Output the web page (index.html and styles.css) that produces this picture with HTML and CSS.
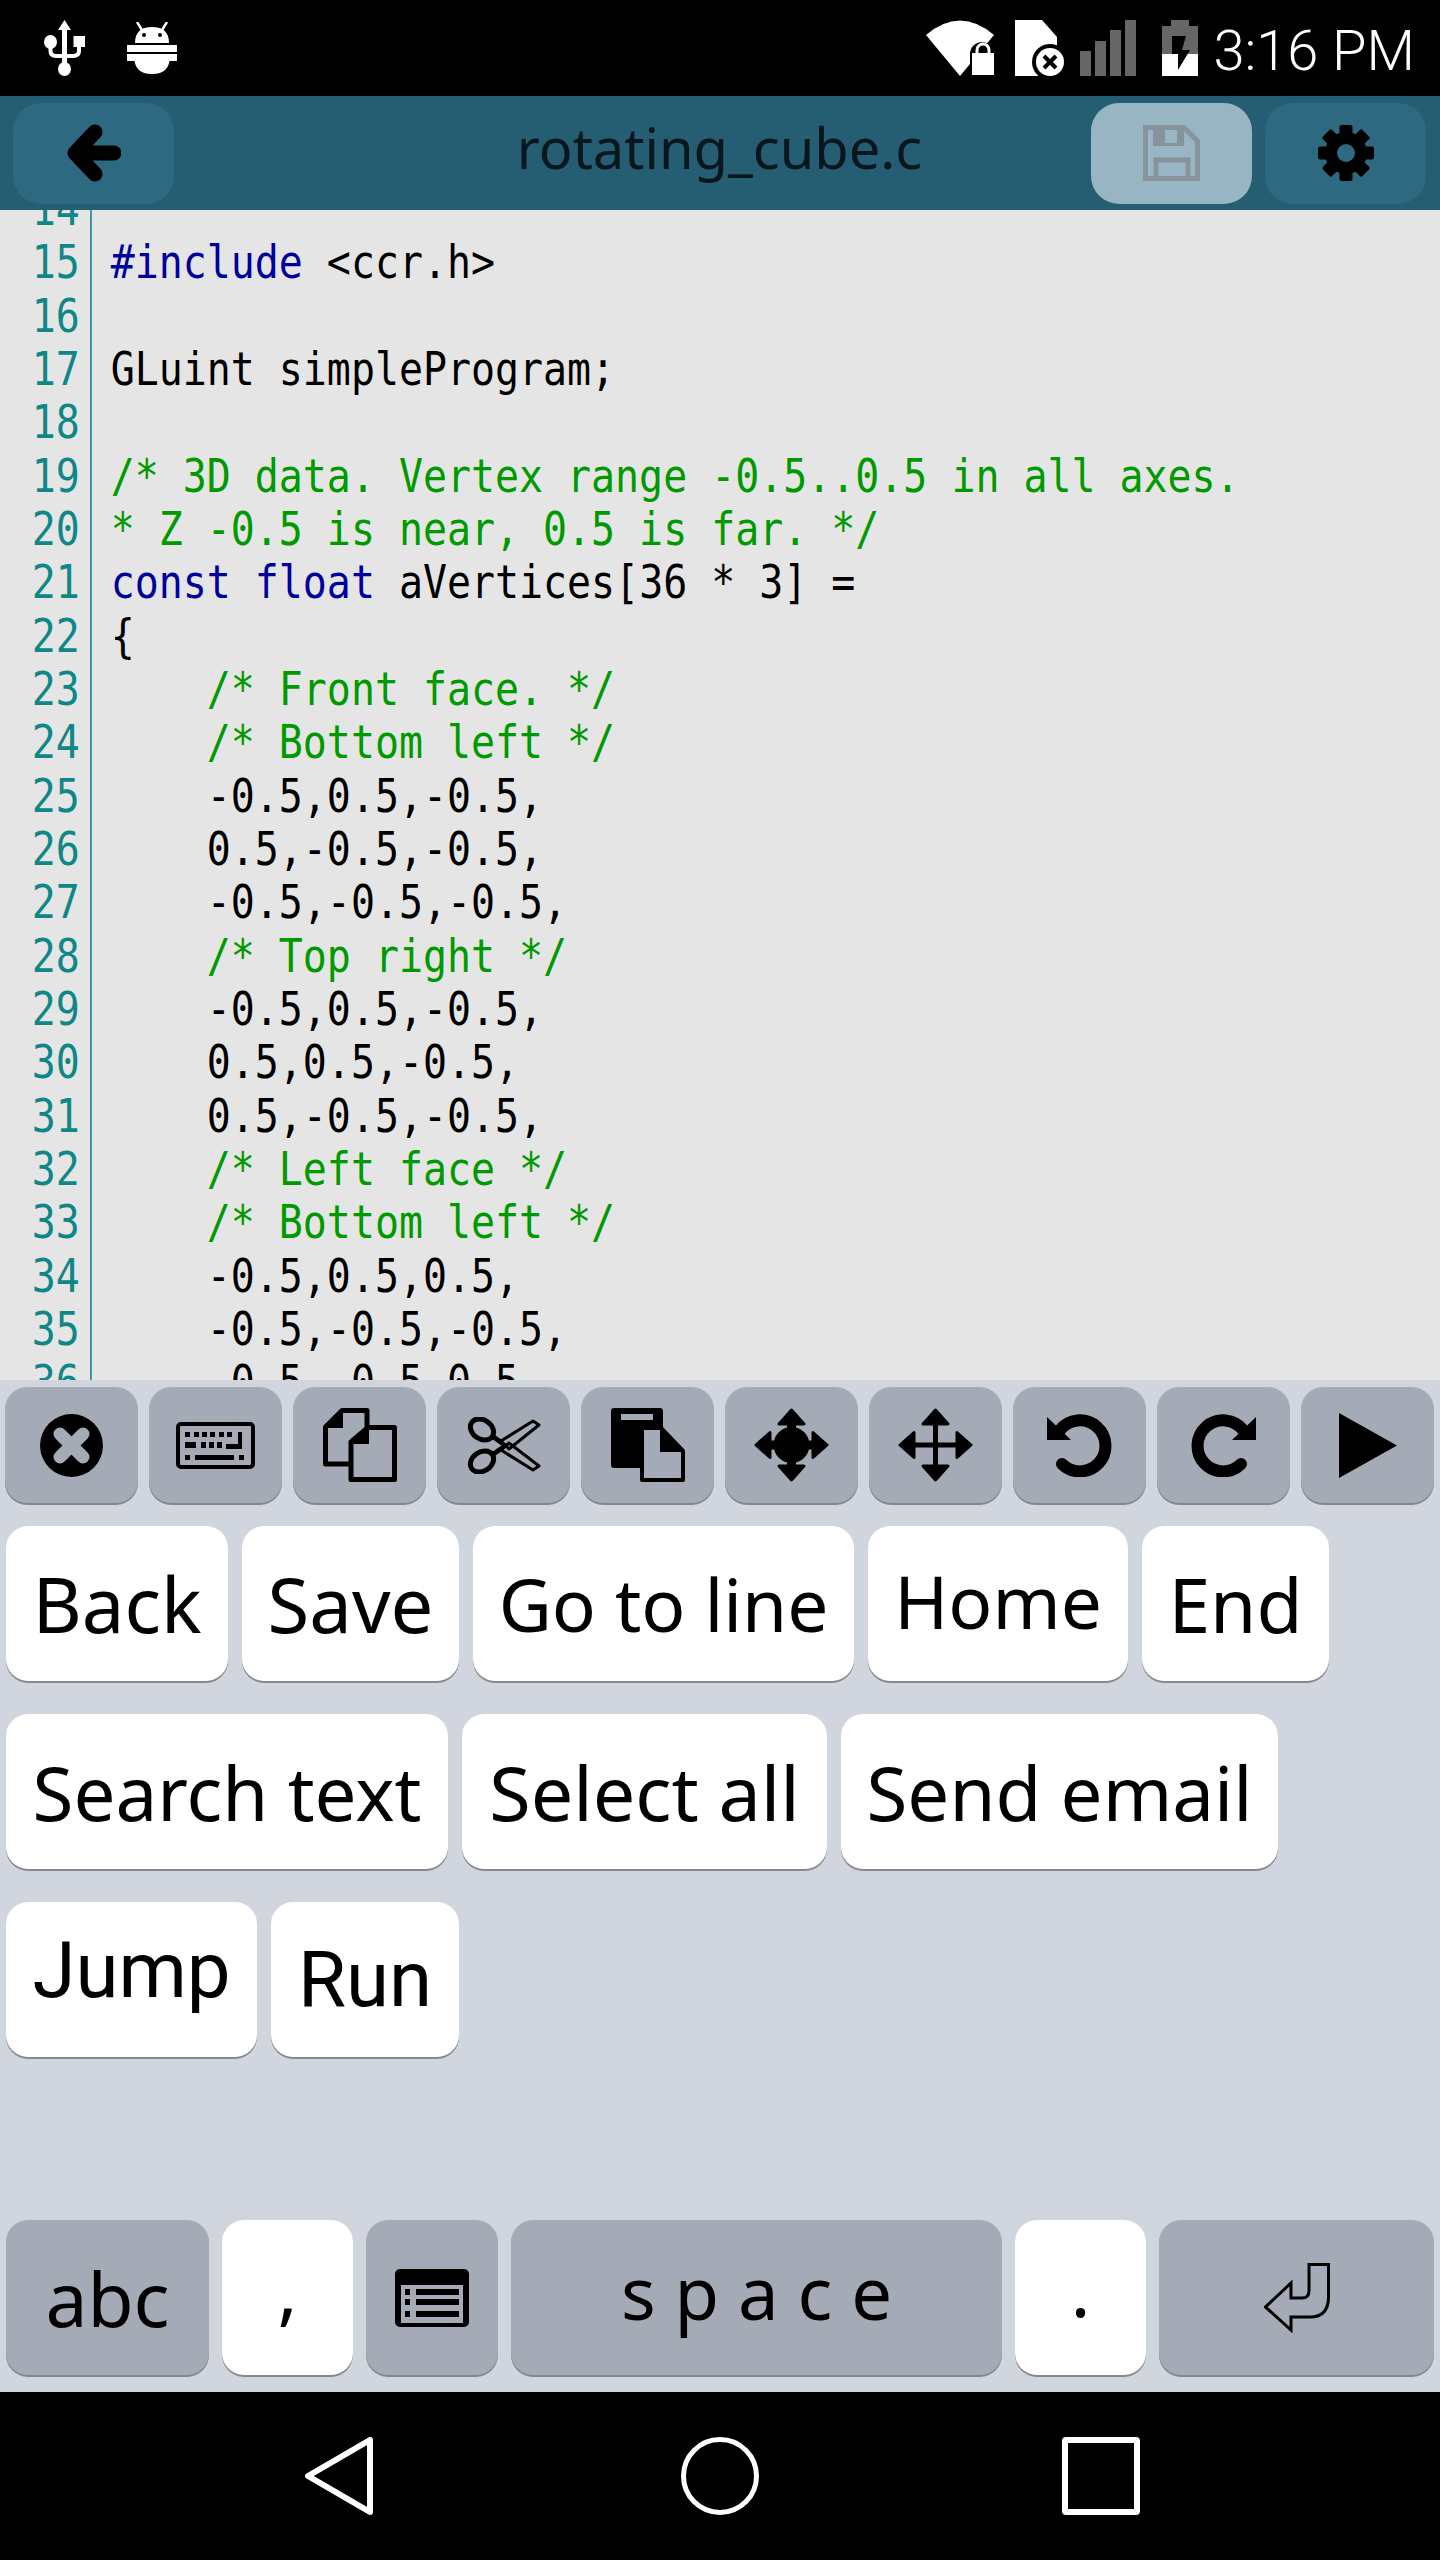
FILE: index.html
```html
<!DOCTYPE html>
<html lang="en">
<head>
<meta charset="utf-8">
<title>rotating_cube.c</title>
<link rel="stylesheet" href="styles.css">
</head>
<body>
<div class="phone">
  <header class="status">
    <div class="status-left">
      <svg class="ic-usb" width="41" height="56" viewBox="0 0 41 56"><path d="M20.5 0 27 10H23V45H18V10H14Z" fill="#fff"/><ellipse cx="20.5" cy="49" rx="6.5" ry="7" fill="#fff"/><ellipse cx="6.5" cy="22" rx="6.5" ry="7" fill="#fff"/><rect x="29.5" y="16" width="11.5" height="11" fill="#fff"/><path d="M6.5 24V31Q6.500 36 12 36H29Q35 36 35 31V24" fill="none" stroke="#fff" stroke-width="4"/></svg>
      <svg class="ic-android" width="50" height="52" viewBox="0 0 50 52"><path d="M8 21Q8 5 25 5Q42 5 42 21Z" fill="#fff"/><path d="M10 0 15 8M40 0 35 8" stroke="#fff" stroke-width="2.500"/><circle cx="17" cy="13" r="2" fill="#000"/><circle cx="33" cy="13" r="2" fill="#000"/><rect y="23" width="50" height="7" fill="#fff"/><rect y="32" width="50" height="7" fill="#fff"/><path d="M7 23H43V34Q43 52 25 52Q7 52 7 34Z" fill="#fff"/><rect y="30" width="50" height="2" fill="#000"/></svg>
    </div>
    <div class="status-right">
      <svg class="ic-wifi" width="68" height="56" viewBox="0 0 68 56"><path d="M0 15Q34-14 68 15L34 56Z" fill="#fff"/><path d="M44 56V34A12 12 0 0 1 68 34V56Z" fill="#000"/><rect x="46" y="33" width="22" height="22" fill="#fff"/><path d="M51 34V30A6 6 0 0 1 63 30V34" fill="none" stroke="#fff" stroke-width="3"/></svg>
      <svg class="ic-sim" width="52" height="56" viewBox="0 0 52 56"><path d="M0 0H27L42 17V56H0Z" fill="#fff"/><circle cx="35" cy="42" r="18" fill="#000"/><circle cx="35" cy="42" r="14" fill="#fff"/><path d="M29 36 41 48M41 36 29 48" stroke="#000" stroke-width="4"/></svg>
      <svg class="ic-signal" width="56" height="56" viewBox="0 0 56 56"><path d="M0 31H11V56H0ZM15 21H26V56H15ZM30 10H41V56H30ZM45 0H56V56H45Z" fill="#666"/></svg>
      <svg class="ic-batt" width="36" height="56" viewBox="0 0 36 56"><path d="M9 0H27V6H36V34H0V6H9Z" fill="#666"/><rect y="34" width="36" height="22" fill="#fff"/><path d="M10 16H24L20 30H28L16 50V34H10Z" fill="#000"/></svg>
      <span class="clock">3:16 PM</span>
    </div>
  </header>

  <nav class="toolbar">
    <div class="tool-left">
      <div class="tool-btn">
        <svg width="54" height="58" viewBox="0 0 54 58"><path d="M28 8 8 29 28 50M10 29H47" fill="none" stroke="#000" stroke-width="15" stroke-linecap="round" stroke-linejoin="round"/></svg>
      </div>
    </div>
    <h1 class="title">rotating_cube.c</h1>
    <div class="tool-right">
      <div class="tool-btn tool-btn-off">
        <svg width="57" height="56" viewBox="0 0 57 56"><path d="M2.500 2.500H41L54.500 16V53.500H2.500Z" fill="none" stroke="#87939a" stroke-width="5"/><path d="M10 2H41V21H10Z" fill="#87939a"/><rect x="22" y="5" width="12" height="13" fill="#98b5c3"/><rect x="13" y="35" width="32" height="19" fill="none" stroke="#87939a" stroke-width="5"/></svg>
      </div>
      <div class="tool-btn">
        <svg width="56" height="56" viewBox="-28 -28 56 56"><g fill="#000"><rect x="-6.500" y="-28" width="13" height="56" rx="2"/><rect x="-6.500" y="-28" width="13" height="56" rx="2" transform="rotate(45)"/><rect x="-6.500" y="-28" width="13" height="56" rx="2" transform="rotate(90)"/><rect x="-6.500" y="-28" width="13" height="56" rx="2" transform="rotate(135)"/><circle r="21"/></g><circle r="9" fill="#2d6a82"/></svg>
      </div>
    </div>
  </nav>

  <main class="editor">
    <div class="sheet">
      <div class="gutter">14
15
16
17
18
19
20
21
22
23
24
25
26
27
28
29
30
31
32
33
34
35
36</div>
      <div class="code">
<span class="kw">#include</span> &lt;ccr.h&gt;

GLuint simpleProgram;

<span class="cm">/* 3D data. Vertex range -0.5..0.5 in all axes.</span>
<span class="cm">* Z -0.5 is near, 0.5 is far. */</span>
<span class="kw">const float</span> aVertices[36 * 3] =
{
    <span class="cm">/* Front face. */</span>
    <span class="cm">/* Bottom left */</span>
    -0.5,0.5,-0.5,
    0.5,-0.5,-0.5,
    -0.5,-0.5,-0.5,
    <span class="cm">/* Top right */</span>
    -0.5,0.5,-0.5,
    0.5,0.5,-0.5,
    0.5,-0.5,-0.5,
    <span class="cm">/* Left face */</span>
    <span class="cm">/* Bottom left */</span>
    -0.5,0.5,0.5,
    -0.5,-0.5,-0.5,
    -0.5,-0.5,0.5,</div>
    </div>
  </main>

  <section class="keyboard">
    <div class="fn-row">
      <div class="fn-key"><svg width="63" height="63" viewBox="0 0 63 63"><circle cx="31.500" cy="31.500" r="31.500"/><path d="M20 20 43 43M43 20 20 43" stroke="#a5abb6" stroke-width="13" stroke-linecap="round"/></svg></div>
      <div class="fn-key"><svg width="79" height="47" viewBox="0 0 79 47"><rect x="2" y="2" width="75" height="43" rx="3" fill="none" stroke="#000" stroke-width="4"/><path d="M9 10h5v5H9zM18 10h5v5h-5zM26 10h5v5h-5zM34 10h5v5h-5zM43 10h5v5h-5zM51 10h5v5h-5zM62 10h4v17H50v-5h12zM9 20h11v6H9zM25 20h5v6h-5zM33 20h5v6h-5zM41 20h5v6h-5zM9 33h5v5H9zM19 33h39v5H19zM63 33h5v5h-5z"/></svg></div>
      <div class="fn-key"><svg width="74" height="74" viewBox="0 0 74 74"><path d="M2.500 19 19 2.500H44V56H2.500Z" fill="none" stroke="#000" stroke-width="5" stroke-linejoin="round"/><path d="M19 3V19H3Z" stroke="#000" stroke-width="2"/><path d="M28 34 45 19.500H71.500V71.500H28Z" fill="#a5abb6" stroke="#000" stroke-width="5" stroke-linejoin="round"/><path d="M45 20V35H28Z" stroke="#000" stroke-width="2"/></svg></div>
      <div class="fn-key"><svg width="74" height="57" viewBox="0 0 74 57"><ellipse cx="15" cy="12.500" rx="12.500" ry="9.500" transform="rotate(35 15 12.500)" fill="none" stroke="#000" stroke-width="5"/><ellipse cx="15" cy="44.500" rx="12.500" ry="9.500" transform="rotate(-35 15 44.500)" fill="none" stroke="#000" stroke-width="5"/><path d="M25 19 38 28M25 38 38 29" stroke="#000" stroke-width="5"/><path d="M34 24 66 4 72 8 42 32ZM34 33 42 26 72 49 66 53Z" fill="#a5abb6" stroke="#000" stroke-width="3" stroke-linejoin="round"/><circle cx="38" cy="28.500" r="2.500"/></svg></div>
      <div class="fn-key"><svg width="74" height="74" viewBox="0 0 74 74"><rect width="52" height="60" rx="3"/><rect x="10" y="6" width="32" height="6" fill="#a5abb6"/><path d="M31 20H50L72 43V72H31Z" fill="#a5abb6" stroke="#000" stroke-width="4" stroke-linejoin="round"/><path d="M50 20V43H72Z" stroke="#000" stroke-width="2"/></svg></div>
      <div class="fn-key"><svg width="75" height="74" viewBox="0 0 75 74"><circle cx="37.500" cy="37" r="18"/><path d="M33 10h9v54h-9zM11 32.500h53v9H11z"/><g stroke="#000" stroke-width="3" stroke-linejoin="round"><path d="M37.500 2 50 16H25ZM37.500 72 50 58H25ZM2 37 16 24.500V49.500ZM73 37 59 24.500V49.500Z"/></g></svg></div>
      <div class="fn-key"><svg width="75" height="74" viewBox="0 0 75 74"><path d="M35 10h5v54h-5zM11 34.500h53v5H11z"/><g stroke="#000" stroke-width="3" stroke-linejoin="round"><path d="M37.500 2 50 16H25ZM37.500 72 50 58H25ZM2 37 16 24.500V49.500ZM73 37 59 24.500V49.500Z"/></g></svg></div>
      <div class="fn-key"><svg width="65" height="63" viewBox="0 0 65 63"><path d="M13 16A25.500 25.500 0 1 1 15 50" fill="none" stroke="#000" stroke-width="12" stroke-linecap="round"/><path d="M0 3 24 26H0Z"/></svg></div>
      <div class="fn-key"><svg width="65" height="63" viewBox="0 0 65 63"><path d="M52 16A25.500 25.500 0 1 0 50 50" fill="none" stroke="#000" stroke-width="12" stroke-linecap="round"/><path d="M65 3 41 26H65Z"/></svg></div>
      <div class="fn-key"><svg width="58" height="65" viewBox="0 0 58 65"><path d="M0 0 58 32.500 0 65Z"/></svg></div>
    </div>

    <div class="text-row">
      <div class="key k-back">Back</div>
      <div class="key k-save">Save</div>
      <div class="key k-goto">Go to line</div>
      <div class="key k-home">Home</div>
      <div class="key k-end">End</div>
    </div>
    <div class="text-row">
      <div class="key k-search">Search text</div>
      <div class="key k-select">Select all</div>
      <div class="key k-send">Send email</div>
    </div>
    <div class="text-row">
      <div class="key k-jump">Jump</div>
      <div class="key k-run">Run</div>
    </div>

    <div class="bottom-row">
      <div class="key gray">abc</div>
      <div class="key punct">,</div>
      <div class="key gray"><svg width="74" height="58" viewBox="0 0 74 58"><rect width="74" height="58" rx="5"/><rect x="6" y="16" width="62" height="38" fill="#a5abb6"/><path d="M21 20h43v6H21zM21 30h43v6H21zM21 42h43v6H21zM10 20h5v6h-5zM10 30h5v6h-5zM10 42h5v6h-5z"/></svg></div>
      <div class="key gray space">s p a c e</div>
      <div class="key punct">.</div>
      <div class="key gray"><svg width="66" height="70" viewBox="0 0 66 70"><path d="M45 1.500H64.500V34Q64.500 54 46 54H27V67L1.500 44 27 20V35H38Q45 35 45 28Z" fill="none" stroke="#000" stroke-width="3"/></svg></div>
    </div>
  </section>

  <footer class="navbar">
    <svg class="nav-back" width="68" height="78" viewBox="0 0 68 78"><path d="M65 3V75L3 39Z" fill="none" stroke="#fff" stroke-width="6" stroke-linejoin="round"/></svg>
    <svg class="nav-home" width="78" height="78" viewBox="0 0 78 78"><circle cx="39" cy="39" r="36.500" fill="none" stroke="#fff" stroke-width="5"/></svg>
    <svg class="nav-recent" width="78" height="78" viewBox="0 0 78 78"><rect x="3" y="3" width="72" height="72" rx="1" fill="none" stroke="#fff" stroke-width="6"/></svg>
  </footer>
</div>
</body>
</html>
```
FILE: styles.css
```css
* { box-sizing: border-box; }
html, body { margin: 0; padding: 0; background: #000; }
svg { display: block; flex: none; }

.phone {
  width: 1440px;
  height: 2560px;
  display: flex;
  flex-direction: column;
  overflow: hidden;
  font-family: "Noto Sans", sans-serif;
}

/* status bar */
.status {
  height: 96px;
  flex: none;
  background: #000;
  display: flex;
  align-items: center;
  justify-content: space-between;
  padding: 0 25px 0 44px;
}
.status-left, .status-right { display: flex; align-items: center; }
.ic-android { margin-left: 42px; }
.ic-sim { margin-left: 21px; }
.ic-signal { margin-left: 13px; }
.ic-batt { margin-left: 26px; }
.clock {
  margin-left: 15px;
  padding-top: 6px;
  font-family: Roboto, sans-serif;
  font-weight: 300;
  font-size: 56px;
  line-height: 64px;
  color: #fff;
}

/* toolbar */
.toolbar {
  height: 114px;
  flex: none;
  background: #255e73;
  display: grid;
  grid-template-columns: 1fr auto 1fr;
  align-items: center;
  padding: 0 14px 0 13px;
}
.tool-left { display: flex; }
.tool-right { display: flex; justify-content: flex-end; gap: 13px; }
.tool-btn {
  width: 161px;
  height: 101px;
  border-radius: 28px;
  background: #2d6a82;
  display: flex;
  align-items: center;
  justify-content: center;
}
.tool-btn-off { background: #98b5c3; }
.title {
  margin: 0;
  padding-bottom: 13px;
  font-size: 56px;
  font-weight: 400;
  line-height: 76px;
  color: #07171d;
}

/* editor */
.editor {
  height: 1170px;
  flex: none;
  background: #e5e5e5;
  overflow: hidden;
}
.sheet {
  width: 1679px;
  margin-top: -27px;
  display: flex;
  transform: scaleX(0.858);
  transform-origin: 0 0;
  font-family: "DejaVu Sans Mono", monospace;
  font-size: 46.5px;
  line-height: 53.33px;
}
.gutter {
  width: 107px;
  height: 1300px;
  flex: none;
  white-space: pre;
  padding-left: 37px;
  border-right: 2px solid #1c8f97;
  color: #0e8786;
}
.code {
  padding-left: 22px;
  color: #000;
  white-space: pre;
}
.kw { color: #00009c; }
.cm { color: #009900; }

/* keyboard */
.keyboard {
  flex: 1;
  background: #d1d5de;
  display: flex;
  flex-direction: column;
  padding: 7px 5px 17px 5px;
}
.fn-row {
  display: grid;
  grid-template-columns: repeat(10, 133px);
  column-gap: 11px;
  margin-bottom: 23px;
}
.fn-key {
  height: 116px;
  border-radius: 22px;
  background: #a5abb6;
  box-shadow: 0 2px 0 #85898f;
  display: flex;
  align-items: center;
  justify-content: center;
}
.text-row {
  display: flex;
  gap: 14px;
  margin: 0 0 33px 1px;
}
.key {
  height: 155px;
  flex: none;
  border-radius: 22px;
  background: #fff;
  box-shadow: 0 2px 0 #85898f;
  display: flex;
  align-items: center;
  justify-content: center;
  font-size: 75px;
  color: #000;
  white-space: pre;
}
.k-back { width: 222px; font-size: 76px; }
.k-save { width: 217px; font-size: 76px; }
.k-goto { width: 381px; font-size: 73px; }
.k-home { width: 260px; font-size: 73px; padding-bottom: 6px; }
.k-end { width: 187px; }
.k-search { width: 442px; font-size: 74.5px; }
.k-select { width: 365px; font-size: 75.5px; }
.k-send { width: 437px; font-size: 74.5px; }
.k-jump, .k-run { font-family: Roboto, sans-serif; font-size: 78px; }
.k-jump { width: 251px; padding-bottom: 18px; }
.k-run { width: 188px; }

.bottom-row {
  margin: auto 0 0 1px;
  display: grid;
  grid-template-columns: 203px 131px 132px 491px 131px 275px;
  column-gap: 13px;
}
.bottom-row .key { width: auto; }
.gray { background: #a5abb6; }
.bottom-row .space { padding-bottom: 12px; font-size: 72.5px; }
.bottom-row .punct { padding-bottom: 20px; }

/* navigation bar */
.navbar {
  height: 168px;
  flex: none;
  background: #000;
  display: flex;
  align-items: center;
  padding: 0 0 0 305px;
}
.nav-home { margin-left: 308px; }
.nav-recent { margin-left: 303px; }
```
